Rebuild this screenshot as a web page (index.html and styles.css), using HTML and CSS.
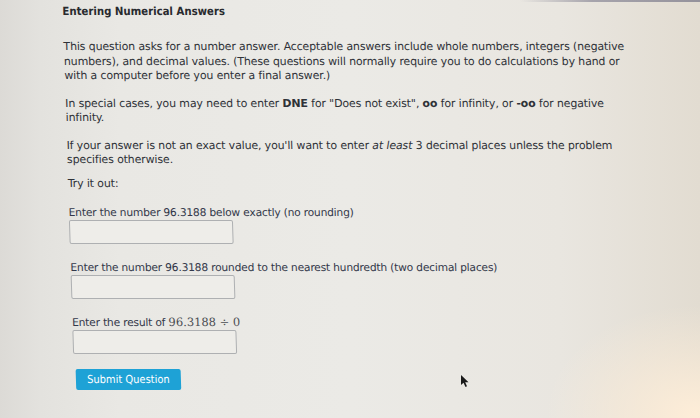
FILE: index.html
```html
<!DOCTYPE html>
<html>
<head>
<meta charset="utf-8">
<link rel="stylesheet" href="styles.css">
</head>
<body>
<div class="screen">
  <div class="topedge"></div>
  <div class="content">
    <h1 class="title">Entering Numerical Answers</h1>
    <p class="para">This question asks for a number answer. Acceptable answers include whole numbers, integers (negative numbers), and decimal values. (These questions will normally require you to do calculations by hand or with a computer before you enter a final answer.)</p>
    <p class="para">In special cases, you may need to enter <b>DNE</b> for "Does not exist", <b>oo</b> for infinity, or <b>-oo</b> for negative infinity.</p>
    <p class="para p3">If your answer is not an exact value, you'll want to enter <i>at least</i> 3 decimal places unless the problem specifies otherwise.</p>
    <p class="para try">Try it out:</p>
    <div class="q">
      <div class="label">Enter the number 96.3188 below exactly (no rounding)</div>
      <div class="box"></div>
    </div>
    <div class="q">
      <div class="label">Enter the number 96.3188 rounded to the nearest hundredth (two decimal places)</div>
      <div class="box"></div>
    </div>
    <div class="q last">
      <div class="label">Enter the result of <span class="math">96.3188 ÷ 0</span></div>
      <div class="box"></div>
    </div>
    <div class="btn">Submit Question</div>
  </div>
  <div class="cursor">
    <svg width="10" height="14" viewBox="0 0 10 14"><path d="M1 1 L1 11 L3.5 8.8 L5.5 13 L7 12.3 L5.2 8.3 L8.5 8.3 Z" fill="#1a1a1a"/></svg>
  </div>
</div>
</body>
</html>
```
FILE: styles.css
```css
html, body {
  margin: 0;
  padding: 0;
}
body {
  width: 700px;
  height: 418px;
  overflow: hidden;
}
.screen {
  position: relative;
  width: 700px;
  height: 418px;
  background:
    radial-gradient(ellipse 150px 110px at 695px 415px, rgba(255,238,216,0.95), rgba(255,238,216,0) 100%),
    linear-gradient(90deg, #dcdad6 0px, #e3e2de 40px, #e9e8e4 120px, #ebeae6 350px, #e9e6e0 560px, #e2dcd1 700px);
  font-family: "DejaVu Sans", Verdana, sans-serif;
  color: #2f3238;
}
.topedge {
  position: absolute;
  left: 520px;
  top: 0;
  width: 180px;
  height: 2px;
  background: linear-gradient(90deg, rgba(150,148,160,0), rgba(150,148,160,0.8) 40%, rgba(140,138,150,0.9));
}
.content {
  padding: 4px 0 0 62px;
  transform: skewX(1.8deg);
  transform-origin: top left;
  width: 580px;
}
.title {
  margin: 0 0 20px 0;
  font-family: "DejaVu Sans Condensed", "DejaVu Sans", sans-serif;
  font-size: 11.3px;
  font-weight: bold;
  line-height: 16px;
  color: #282a2e;
}
.para {
  margin: 0 0 13px 0;
  font-size: 11px;
  line-height: 14.5px;
  letter-spacing: -0.15px;
}
.para b {
  font-weight: bold;
}
.p3 {
  margin-bottom: 9px;
}
.try {
  margin: 0 0 15px 0;
}
.q {
  margin-bottom: 17px;
}
.q.last {
  margin-bottom: 14px;
}
.label {
  height: 14px;
  font-size: 10.7px;
  line-height: 14px;
  letter-spacing: -0.2px;
  color: #33384a;
}
.math {
  font-family: "DejaVu Serif", "Liberation Serif", serif;
  font-size: 11.5px;
  line-height: 1;
  letter-spacing: 0;
  color: #4a4d52;
}
.box {
  width: 162px;
  height: 22px;
  border: 1px solid #aeb0b2;
  border-radius: 2px;
  background: #eeede9;
}
.btn {
  display: inline-block;
  margin-left: 2px;
  padding: 4px 0 4px 0;
  width: 105px;
  text-align: center;
  background: #1ea2d6;
  color: #ffffff;
  font-family: "DejaVu Sans Condensed", "DejaVu Sans", sans-serif;
  font-size: 11px;
  line-height: 13px;
  border-radius: 2px;
}
.cursor {
  position: absolute;
  left: 460px;
  top: 373px;
}
```
